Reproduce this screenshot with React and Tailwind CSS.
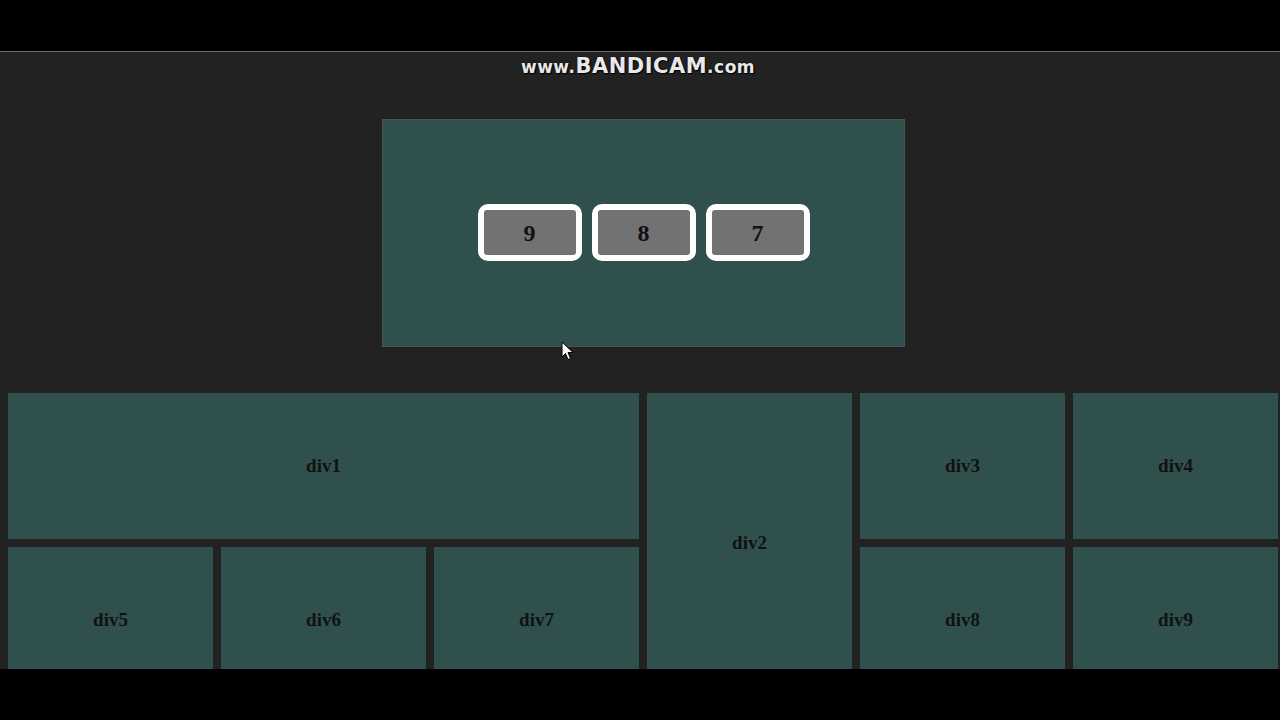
import React from "react";

/* ---------- DATA ---------- */

const counters = ["9", "8", "7"];

/* ---------- UI ---------- */

const Cursor = () => (
  <svg
    className="absolute left-[561px] top-[341px]"
    width="13"
    height="20"
    viewBox="0 0 13 20"
  >
    <path
      d="M1 1 L1 16 L4.5 12.5 L7 18.5 L9.5 17.5 L7 11.5 L12 11.5 Z"
      fill="#fff"
      stroke="#000"
      strokeWidth="1"
      strokeLinejoin="round"
    />
  </svg>
);

const Counter = ({ value }) => (
  <div className="w-[104px] h-[57px] rounded-[10px] bg-white p-[6px]">
    <div className="w-full h-full rounded-[3px] bg-[#727272] flex items-center justify-center text-[24px] font-bold text-[#111] font-['Liberation_Serif',serif]">
      {value}
    </div>
  </div>
);

const Cell = ({ label, className = "" }) => (
  <div
    className={`bg-[#2f504c] flex items-center justify-center text-[19px] font-bold text-[#111] font-['Liberation_Serif',serif] ${className}`}
  >
    {label}
  </div>
);

/* ---------- MAIN ---------- */

export default function App() {
  return (
    <div className="relative w-[1280px] h-[720px] bg-black overflow-hidden">
      {/* letterbox top */}
      <div className="h-[51px] bg-black" />
      <div className="h-px bg-[#6e6e6e]" />

      {/* page */}
      <div className="h-[617px] bg-[#222222] overflow-hidden">
        <div className="pt-[67px] pl-[382px]">
          <div className="w-[523px] h-[228px] bg-[#2f504d] border border-[#4a5452] flex items-center justify-center gap-[10px] pb-[1px]">
            {counters.map((c) => (
              <Counter key={c} value={c} />
            ))}
          </div>
        </div>

        {/* grid */}
        <div className="mt-[46px] ml-[8px] grid grid-cols-[repeat(6,205px)] grid-rows-[146px_146px] gap-[8px]">
          <Cell label="div1" className="col-span-3" />
          <Cell label="div2" className="row-span-2" />
          <Cell label="div3" />
          <Cell label="div4" />
          <Cell label="div5" />
          <Cell label="div6" />
          <Cell label="div7" />
          <Cell label="div8" />
          <Cell label="div9" />
        </div>
      </div>

      {/* letterbox bottom */}
      <div className="h-[51px] bg-black" />

      {/* watermark */}
      <div className="absolute top-[51px] left-0 w-full flex justify-center pr-[4px]">
        <span className="text-[#e8e8e8] font-bold font-['DejaVu_Sans',sans-serif] tracking-[0.5px] [text-shadow:0_0_2px_#000,1px_1px_1px_#000]">
          <span className="text-[17px]">www.</span>
          <span className="text-[21px]">BANDICAM</span>
          <span className="text-[17px]">.com</span>
        </span>
      </div>

      <Cursor />
    </div>
  );
}
